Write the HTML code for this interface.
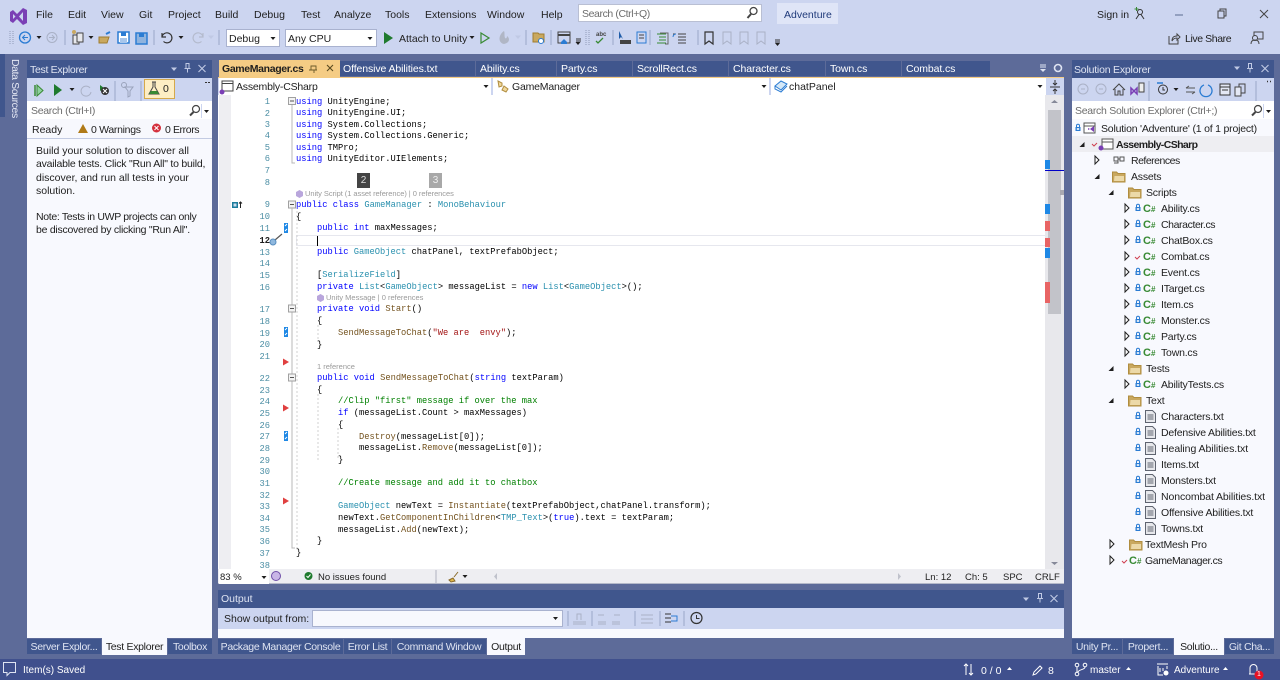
<!DOCTYPE html>
<html><head><meta charset="utf-8"><style>
html,body{margin:0;padding:0;width:1280px;height:680px;overflow:hidden;background:#5d6b99}
body{position:relative;font:10.5px/14px "Liberation Sans",sans-serif;color:#1e1e1e}
.b{position:absolute}
.t{position:absolute;white-space:pre;line-height:14px}
.w{color:#fff}.l{color:#dfe4f2}
.st{font-size:9.5px}
.c{position:absolute;white-space:pre;font:8.75px/12px "Liberation Mono",monospace;color:#000;margin-top:1px}
.n{position:absolute;width:40px;left:230px;text-align:right;font:8.75px/12px "Liberation Mono",monospace;color:#2b7a94;opacity:.85;margin-top:1px}
.k{color:#0000ff}.y{color:#2b91af}.s{color:#a31515}.g{color:#008000}.m{color:#74531f}
.h{position:absolute;white-space:pre;font-size:7.5px;line-height:10px;color:#9a9a9a;margin-top:1px}
svg{position:absolute;overflow:visible}
.tab{position:absolute;top:61px;height:15px;background:#40568d;color:#fff;line-height:14px;padding:1px 0 0 3px;box-sizing:border-box;white-space:pre;letter-spacing:-.1px}
.bt{position:absolute;top:639px;height:15px;background:#40568d;color:#dfe4f2;line-height:17px;text-align:center;white-space:pre;letter-spacing:-.3px}
.tr{position:absolute;white-space:pre;line-height:16px;height:16px;color:#1e1e1e;margin-top:1px;letter-spacing:-.2px}
.cs{position:absolute;font:bold 11px/16px "Liberation Sans",sans-serif;color:#388a34;white-space:pre;margin-top:1px}
.cs i{font-style:normal;font-size:8px}
.tb{position:absolute;width:1px;background:#9aa6c8}
</style></head><body>
<svg width="0" height="0" style="position:absolute"><defs>
<g id="lock"><rect x="-2.500" y="-1" width="5" height="4" fill="#2b7cd3"/><path d="M-1.500-1v-1.200a1.500 1.500 0 0 1 3 0V-1" fill="none" stroke="#2b7cd3"/><rect x="-1.200" y=".2" width="2.400" height="1.600" fill="#fff"/></g>
<g id="open"><path d="M1.500-2L-3.500 3H1.500z" fill="#1e1e1e"/></g>
<g id="closed"><path d="M-2-4L2 0L-2 4z" fill="#fff" stroke="#1e1e1e"/></g>
<g id="folder"><path d="M.5 2h4l1.500 1.500h7v8.500h-12.500z" fill="#c9a85f" stroke="#b08d3f"/><path d="M2.500 6h9.500v5h-10z" fill="#ecd9a8"/></g>
<g id="file"><path d="M.5 .5h7l3 3v9h-10z" fill="#e7e8ec" stroke="#5f6470"/><path d="M2.500 5h6M2.500 7h6M2.500 9h6" stroke="#5f6470"/></g>
<g id="dn"><path d="M-2.500-1h5L0 2z" fill="#1e1e1e"/></g>
<g id="dnw"><path d="M-3-1.500h6L0 2z" fill="#c0c9e4"/></g>
<g id="pin"><path d="M-2-4.500h4M-1.500-4.500v5h3v-5M-3 .5h6M0 .5v4" fill="none" stroke="#c0c9e4"/></g>
<g id="x"><path d="M-3.500-3.500l7 7M3.500-3.500l-7 7" stroke="#c0c9e4" stroke-width="1.100"/></g>
<g id="chg"><rect x="0" y="0" width="4" height="10" fill="#1e88e5"/><path d="M1 3l2-2M1 8l2-2" stroke="#fff"/></g>
<g id="tri"><path d="M0-3.500L6 0L0 3.500z" fill="#e04040"/></g>
<g id="box"><rect x=".5" y=".5" width="7" height="7" fill="#f3f3f3" stroke="#a0a0a0"/><path d="M2 4h4" stroke="#555"/></g>
<g id="uni"><path d="M3.500 0L7 2v4L3.500 8L0 6V2z" fill="#b9a6dc"/></g>
</defs></svg>

<!-- top chrome -->
<div class="b" style="left:0;top:0;width:1280px;height:54px;background:#ccd5f0"></div>
<svg style="left:9px;top:6px" width="20" height="20"><path d="M1 6l3-2 4 4 6-6 4 2v13l-4 2-6-6-4 4-3-2zM4 8v5l2.500-2.500zM14 6l-4 4.500 4 4.500z" fill="#7a3fb5" fill-rule="evenodd"/></svg>
<div class="t" style="left:36px;top:8px">File</div>
<div class="t" style="left:68px;top:8px">Edit</div>
<div class="t" style="left:101px;top:8px">View</div>
<div class="t" style="left:139px;top:8px">Git</div>
<div class="t" style="left:168px;top:8px">Project</div>
<div class="t" style="left:215px;top:8px">Build</div>
<div class="t" style="left:254px;top:8px">Debug</div>
<div class="t" style="left:301px;top:8px">Test</div>
<div class="t" style="left:334px;top:8px">Analyze</div>
<div class="t" style="left:385px;top:8px">Tools</div>
<div class="t" style="left:425px;top:8px">Extensions</div>
<div class="t" style="left:487px;top:8px">Window</div>
<div class="t" style="left:541px;top:8px">Help</div>
<div class="b" style="left:578px;top:4px;width:184px;height:18px;background:#fff;border:1px solid #b9bfd3;box-sizing:border-box"></div>
<div class="t" style="left:582px;top:7px;color:#6d6d6d;letter-spacing:-.4px">Search (Ctrl+Q)</div>
<svg style="left:745px;top:6px" width="14" height="14"><circle cx="8.500" cy="5" r="3.500" fill="none" stroke="#444" stroke-width="1.300"/><path d="M6 8L2.500 12" stroke="#444" stroke-width="2"/></svg>
<div class="b" style="left:777px;top:3px;width:61px;height:21px;background:#dfe5f7"></div>
<div class="t" style="left:784px;top:8px;color:#1f3a7a">Adventure</div>
<div class="t" style="left:1097px;top:8px">Sign in</div>
<svg style="left:1133px;top:7px" width="14" height="14"><circle cx="7" cy="5" r="2.500" fill="none" stroke="#333"/><path d="M3 12l3-4.500M11 12L8 7.500" stroke="#333"/><path d="M1.500 2h4M3.500 0v4" stroke="#388a34"/></svg>
<svg style="left:1175px;top:8px" width="90" height="12"><path d="M0 7h8" stroke="#5a6a90"/><path d="M43 3h6v7h-6zM45 3V1h6v7h-2" fill="none" stroke="#444"/><path d="M85 2l8 8M93 2l-8 8" stroke="#444"/></svg>

<!-- toolbar -->
<svg style="left:9px;top:30px" width="6" height="15"><path d="M1 1v13M4 1v13" stroke="#8f9ab8" stroke-dasharray="1 1"/></svg>
<svg style="left:0;top:0" width="520" height="54">
<circle cx="25" cy="37.500" r="5.500" fill="none" stroke="#2b7cd3" stroke-width="1.300"/><path d="M28 37.500h-5M25 35l-2.500 2.500L25 40" stroke="#2b7cd3" fill="none"/>
<use href="#dn" x="39" y="37"/>
<circle cx="52" cy="37.500" r="5" fill="none" stroke="#a9b1c6"/><path d="M49 37.500h5M52 35l2.500 2.500L52 40" stroke="#a9b1c6" fill="none"/>
<path d="M65 30v15M154 30v15M219 30v15" stroke="#9aa6c8"/>
<rect x="73" y="35" width="6" height="9" fill="#e7e8ec" stroke="#444"/><rect x="77" y="33" width="6" height="9" fill="#e7e8ec" stroke="#444"/><circle cx="74" cy="32" r="2" fill="#c9a85f"/>
<use href="#dn" x="91" y="37"/>
<path d="M99 37h10l-2 6H99z" fill="#c9a85f" stroke="#a07d2f"/><path d="M106 34l4-2" stroke="#2b7cd3" stroke-width="2"/>
<rect x="118" y="32" width="11" height="11" fill="#fff" stroke="#2b7cd3" stroke-width="1.500"/><rect x="121" y="32" width="5" height="4" fill="#2b7cd3"/><rect x="120" y="38" width="7" height="5" fill="#a7c6ec"/>
<rect x="136" y="33" width="11" height="11" fill="#8fb3de" stroke="#2b7cd3" stroke-width="1.500"/><rect x="139" y="33" width="5" height="4" fill="#2b7cd3"/>
<path d="M162 37a5 5 0 1 1 1.500 4.500M162 33v4h4" fill="none" stroke="#333" stroke-width="1.200"/>
<use href="#dn" x="181" y="37"/>
<path d="M203 37a5 5 0 1 0-1.500 4.500M203 33v4h-4" fill="none" stroke="#b4bbcd" stroke-width="1.200"/>
<use href="#dnw" x="211" y="37" style="fill:#999"/>
</svg>
<div class="b" style="left:226px;top:29px;width:54px;height:18px;background:#fff;border:1px solid #a9b2cf;box-sizing:border-box"></div>
<div class="t" style="left:229px;top:32px">Debug</div>
<svg style="left:273px;top:38px" width="6" height="4"><use href="#dn" x="0" y="0"/></svg>
<div class="b" style="left:285px;top:29px;width:92px;height:18px;background:#fff;border:1px solid #a9b2cf;box-sizing:border-box"></div>
<div class="t" style="left:288px;top:32px">Any CPU</div>
<svg style="left:370px;top:38px" width="6" height="4"><use href="#dn" x="0" y="0"/></svg>
<svg style="left:384px;top:32px" width="10" height="12"><path d="M0 0l9 6-9 6z" fill="#1f7a2e"/></svg>
<div class="t" style="left:399px;top:32px">Attach to Unity</div>
<svg style="left:0;top:0" width="800" height="54">
<use href="#dn" x="472" y="37"/>
<path d="M481 33l8 5-8 5z" fill="none" stroke="#388a34" stroke-width="1.200"/>
<path d="M504 31c-6 4-6 12 0 13 6-1 6-6 3-8 0 2-1 3-2 2-1-3 0-5-1-7z" fill="#b0b6c5"/>
<use href="#dnw" x="518" y="37" style="fill:#999"/>
<path d="M526 30v15M551 30v15M613 30v15M650 30v15M698 30v15" stroke="#9aa6c8"/>
<path d="M533 33h5l1 1h5v8h-11z" fill="#c9a85f" stroke="#a07d2f"/><circle cx="541" cy="41" r="2.500" fill="#fff" stroke="#2b7cd3"/>
<rect x="558" y="32" width="12" height="11" fill="none" stroke="#444"/><path d="M558 35h12" stroke="#444" stroke-width="2"/><path d="M561 42l3-3 3 3v2h-6z" fill="#2b7cd3"/>
<path d="M576 39h5M576 41h5" stroke="#333"/><use href="#dn" x="578" y="43"/>
<path d="M586 30v15M589 30v15" stroke="#8f9ab8" stroke-dasharray="1 1"/>
<text x="596" y="36" font-family="Liberation Sans" font-size="6" font-weight="bold" fill="#444">abc</text>
<path d="M596 41l2 2 5-5" fill="none" stroke="#388a34" stroke-width="1.300"/>
<path d="M619 31v8l2-2 2 2z" fill="#1f5ca8"/><rect x="620" y="40" width="11" height="4" fill="#444"/>
<rect x="637" y="32" width="9" height="11" fill="none" stroke="#2b7cd3"/><path d="M639 35h5M639 38h5" stroke="#444"/>
<path d="M657 34h9M659 37h7M659 40h7M657 43h9" stroke="#388a34"/><path d="M660 33h8v11h-3" fill="none" stroke="#666"/>
<path d="M673 34h3M678 34h8M678 37h8M678 40h8M678 43h8" stroke="#444"/><path d="M673 37a3 3 0 0 1 3-3" stroke="#2b7cd3" fill="none"/>
<path d="M705 32h8v12l-4-3-4 3z" fill="none" stroke="#333" stroke-width="1.200"/>
<path d="M723 32h8v12l-4-3-4 3zM740 32h8v12l-4-3-4 3zM757 32h8v12l-4-3-4 3z" fill="none" stroke="#aab1c6"/>
<path d="M775 40h5M775 42h5" stroke="#333"/><use href="#dn" x="777.500" y="44"/>
</svg>
<svg style="left:1168px;top:32px" width="13" height="13"><path d="M1 4v8h9V8" fill="none" stroke="#444"/><path d="M4 9c0-4 2-5 5-5V2l3 3-3 3V6c-2 0-4 1-5 3z" fill="none" stroke="#444"/></svg>
<div class="t" style="left:1185px;top:32px;letter-spacing:-.4px">Live Share</div>
<svg style="left:1250px;top:31px" width="14" height="14"><rect x="4" y="1" width="9" height="7" fill="none" stroke="#444"/><circle cx="5" cy="7" r="2.500" fill="#ccd5f0" stroke="#444"/><path d="M1 13c0-3 2-4 4-4s4 1 4 4" fill="none" stroke="#444"/></svg>

<!-- left rail -->
<div class="b" style="left:0;top:54px;width:5px;height:63px;background:#40568d"></div>
<div class="t" style="left:8px;top:59px;color:#e6e9f5;writing-mode:vertical-rl;letter-spacing:-.4px">Data Sources</div>

<!-- test explorer -->
<div class="b" style="left:27px;top:60px;width:185px;height:18px;background:#40568d"></div>
<div class="t l" style="left:30px;top:63px;letter-spacing:-.3px">Test Explorer</div>
<svg style="left:0;top:0" width="212" height="80"><use href="#dnw" x="174" y="69"/><use href="#pin" x="187.500" y="68"/><use href="#x" x="202" y="68.500"/></svg>
<div class="b" style="left:27px;top:78px;width:185px;height:23px;background:#ccd5f0"></div>
<svg style="left:0;top:0" width="212" height="102">
<path d="M35 85v11" stroke="#388a34" stroke-width="1.500"/><path d="M37 85l6 5.500-6 5.500z" fill="#8fd19e" stroke="#388a34"/>
<path d="M54 84l8 6-8 6z" fill="#1f7a2e"/><use href="#dn" x="72" y="89"/>
<path d="M90 88a5 5 0 1 0 1 4" fill="none" stroke="#aab1c6"/>
<path d="M100 85l4 3-4 3z" fill="#1f7a2e"/><circle cx="105" cy="91" r="4" fill="#333"/><path d="M103 89l4 4M107 89l-4 4" stroke="#fff"/>
<path d="M115 81v20M141 81v20" stroke="#9aa6c8"/>
<circle cx="124" cy="85" r="2.500" fill="none" stroke="#9aa3bb"/><path d="M125 87h8l-3 4v5l-2 1v-6z" fill="none" stroke="#9aa3bb"/>
</svg>
<div class="b" style="left:144px;top:79px;width:31px;height:20px;background:#fdeec4;border:1px solid #d5a94b;box-sizing:border-box"></div>
<svg style="left:148px;top:81px" width="12" height="15"><path d="M4 1h4M5 1v5L1 13h10L7 6V1" fill="#fdeec4" stroke="#444"/><path d="M3 10h6l2 3H1z" fill="#388a34"/></svg>
<div class="t" style="left:163px;top:82px">0</div>
<div class="b" style="left:205px;top:82px;width:2px;height:1px;background:#333;box-shadow:3px 0 #333"></div>
<div class="b" style="left:27px;top:101px;width:185px;height:18px;background:#fff"></div>
<div class="t" style="left:31px;top:104px;color:#6d6d6d;letter-spacing:-.3px">Search (Ctrl+I)</div>
<svg style="left:188px;top:104px" width="24" height="14"><circle cx="8" cy="5" r="3.500" fill="none" stroke="#444" stroke-width="1.200"/><path d="M5.500 8L2 11.500" stroke="#444" stroke-width="2"/><path d="M13.500 0v14" stroke="#ccd5f0"/><use href="#dn" x="18.500" y="7"/></svg>
<div class="b" style="left:27px;top:119px;width:185px;height:20px;background:#f7f8fd;border-bottom:1px solid #c3cbe2;box-sizing:border-box"></div>
<div class="t" style="left:32px;top:123px">Ready</div>
<svg style="left:78px;top:123px" width="11" height="11"><path d="M5 1l5 9H0z" fill="#b07a17"/></svg>
<div class="t" style="left:91px;top:123px;letter-spacing:-.3px">0 Warnings</div>
<svg style="left:151px;top:123px" width="11" height="11"><circle cx="5.500" cy="5" r="4.500" fill="#d4303d"/><path d="M3.500 3l4 4M7.500 3l-4 4" stroke="#fff"/></svg>
<div class="t" style="left:165px;top:123px;letter-spacing:-.4px">0 Errors</div>
<div class="b" style="left:27px;top:139px;width:185px;height:499px;background:#f8f9fe"></div>
<div class="t" style="left:36px;top:144px">Build your solution to discover all</div>
<div class="t" style="left:36px;top:157px;letter-spacing:-.22px">available tests. Click "Run All" to build,</div>
<div class="t" style="left:36px;top:171px">discover, and run all tests in your</div>
<div class="t" style="left:36px;top:184px">solution.</div>
<div class="t" style="left:36px;top:210px;letter-spacing:-.33px">Note: Tests in UWP projects can only</div>
<div class="t" style="left:36px;top:223px;letter-spacing:-.26px">be discovered by clicking "Run All".</div>
<div class="bt" style="left:27px;width:74px">Server Explor...</div>
<div class="bt" style="left:102px;width:65px;background:#f8f9fe;color:#1e1e1e;height:17px;top:638px;line-height:19px">Test Explorer</div>
<div class="bt" style="left:168px;width:44px">Toolbox</div>

<!-- editor tabs -->
<div class="b" style="left:219px;top:60px;width:121px;height:18px;background:#f5cc84"></div>
<div class="t" style="left:222px;top:62px;font-weight:bold;color:#1e1e1e;letter-spacing:-.35px">GameManager.cs</div>
<svg style="left:0;top:0" width="340" height="80"><path d="M311 66h5v4h-5zM309 70h8M314 70v3" fill="none" stroke="#6b5a2a" stroke-width=".9"/><path d="M327 65l6 6M333 65l-6 6" stroke="#5a4a20" stroke-width="1.100"/></svg>
<div class="tab" style="left:340px;width:135px">Offensive Abilities.txt</div>
<div class="tab" style="left:476px;width:80px;padding-left:4px">Ability.cs</div>
<div class="tab" style="left:557px;width:75px;padding-left:4px">Party.cs</div>
<div class="tab" style="left:633px;width:95px;padding-left:4px">ScrollRect.cs</div>
<div class="tab" style="left:729px;width:96px;padding-left:4px">Character.cs</div>
<div class="tab" style="left:826px;width:75px;padding-left:4px">Town.cs</div>
<div class="tab" style="left:902px;width:88px;padding-left:4px">Combat.cs</div>
<svg style="left:0;top:0" width="1070" height="80"><path d="M1040 65h6M1040 67h6" stroke="#dfe4f2"/><path d="M1040 69h6l-3 3z" fill="#dfe4f2"/><circle cx="1058" cy="68" r="3.500" fill="none" stroke="#dfe4f2" stroke-width="1.600"/></svg>
<div class="b" style="left:218px;top:77px;width:846px;height:1.500px;background:#f5cc84"></div>
<!-- nav bar -->
<div class="b" style="left:218px;top:78px;width:846px;height:17px;background:#ccd5f0"></div>
<div class="b" style="left:219px;top:78px;width:272px;height:17px;background:#fff"></div>
<div class="b" style="left:493px;top:78px;width:276px;height:17px;background:#fff"></div>
<div class="b" style="left:771px;top:78px;width:275px;height:17px;background:#fff"></div>
<svg style="left:0;top:0" width="1064" height="96">
<rect x="222" y="81" width="11" height="10" fill="#fff" stroke="#444"/><path d="M222 83.500h11" stroke="#444"/><circle cx="222" cy="92" r="2.500" fill="#7a3fb5"/>
<use href="#dn" x="486" y="86"/><use href="#dn" x="764" y="86"/><use href="#dn" x="1040" y="86"/>
<path d="M498 81l4 2v3l-3 1zM504 86l4 3-2 3-4-2z" fill="#f1d89b" stroke="#b08d3f"/>
<path d="M775 86l6-5 6 3-6 6z" fill="#d5e8f7" stroke="#2b7cd3"/><path d="M775 86v3l6 3 6-6" fill="none" stroke="#2b7cd3"/>
<path d="M1050 87h10M1055 80v5M1053 83l2 2 2-2M1055 94v-5M1053 91l2-2 2 2" fill="none" stroke="#333"/>
</svg>
<div class="t" style="left:236px;top:80px;letter-spacing:-.2px">Assembly-CSharp</div>
<div class="t" style="left:512px;top:80px;letter-spacing:-.2px">GameManager</div>
<div class="t" style="left:789px;top:80px">chatPanel</div>

<!-- code area -->
<div class="b" style="left:218px;top:95px;width:846px;height:475px;background:#fff"></div>
<div class="b" style="left:219px;top:95px;width:12px;height:475px;background:#eeeef2"></div>
<div class="b" style="left:1045px;top:95px;width:19px;height:475px;background:#e8e8ec"></div>
<div class="b" style="left:1048px;top:110px;width:13px;height:204px;background:#c2c3c9"></div>
<svg style="left:0;top:0" width="1064" height="570"><path d="M1051 103l3.500-3 3.500 3zM1051 562h7l-3.500 3z" fill="#868999"/></svg>
<div class="b" style="left:1045px;top:169.500px;width:19px;height:1.500px;background:#0000c8"></div>
<div class="b" style="left:1060px;top:190px;width:4px;height:5px;background:#a8a8b0"></div>
<div class="b" style="left:1045px;top:160px;width:5px;height:9px;background:#1e88e5"></div>
<div class="b" style="left:1045px;top:204px;width:5px;height:10px;background:#1e88e5"></div>
<div class="b" style="left:1045px;top:221px;width:5px;height:10px;background:#e86464"></div>
<div class="b" style="left:1045px;top:238px;width:5px;height:9px;background:#e86464"></div>
<div class="b" style="left:1045px;top:248px;width:5px;height:10px;background:#1e88e5"></div>
<div class="b" style="left:1045px;top:282px;width:5px;height:21px;background:#e86464"></div>
<!-- current line -->
<div class="b" style="left:296px;top:235px;width:749px;height:11px;border:1px solid #e6e7ee;border-right:0;box-sizing:border-box"></div>
<div class="b" style="left:317px;top:236px;width:1px;height:10px;background:#000"></div>
<!-- margins -->
<svg style="left:0;top:0" width="360" height="570">
<use href="#box" x="288" y="97"/><path d="M292 105v58h3" stroke="#b8b8b8" fill="none"/>
<use href="#box" x="288" y="200.500"/><path d="M292 208v340h3" stroke="#b8b8b8" fill="none"/>
<path d="M297 211v338" stroke="#d0d0d0" stroke-dasharray="2 2"/>
<use href="#box" x="288" y="304.500"/><use href="#box" x="288" y="373.500"/>
<path d="M318 325v17M318 394v68M338 428v32" stroke="#d0d0d0" stroke-dasharray="2 2"/>
<use href="#chg" x="284" y="223"/><use href="#chg" x="284" y="327"/><use href="#chg" x="284" y="431"/>
<use href="#tri" x="283" y="362"/><use href="#tri" x="283" y="408"/><use href="#tri" x="283" y="501"/>
<rect x="232" y="202" width="6" height="6" fill="#1c7c9c"/><rect x="233.500" y="203.500" width="3" height="3" fill="#cde"/><path d="M240.500 208v-6M239 203.500l1.500-1.500 1.500 1.500" stroke="#222" fill="none"/>
<path d="M275 240l7-6" stroke="#555" stroke-width="1.200"/><circle cx="273" cy="242" r="3" fill="#8fb8de" stroke="#5a8fc0"/>
</svg>
<div class="n" style="top:95px">1</div><div class="n" style="top:107px">2</div><div class="n" style="top:118px">3</div><div class="n" style="top:129px">4</div><div class="n" style="top:141px">5</div><div class="n" style="top:152px">6</div><div class="n" style="top:164px">7</div><div class="n" style="top:176px">8</div><div class="n" style="top:198px">9</div><div class="n" style="top:210px">10</div><div class="n" style="top:222px">11</div><div class="n" style="top:234px;font-weight:bold;color:#1e1e1e;opacity:1">12</div><div class="n" style="top:246px">13</div><div class="n" style="top:257px">14</div><div class="n" style="top:269px">15</div><div class="n" style="top:281px">16</div><div class="n" style="top:303px">17</div><div class="n" style="top:315px">18</div><div class="n" style="top:327px">19</div><div class="n" style="top:338px">20</div><div class="n" style="top:350px">21</div><div class="n" style="top:372px">22</div><div class="n" style="top:384px">23</div><div class="n" style="top:395px">24</div><div class="n" style="top:407px">25</div><div class="n" style="top:419px">26</div><div class="n" style="top:430px">27</div><div class="n" style="top:442px">28</div><div class="n" style="top:454px">29</div><div class="n" style="top:465px">30</div><div class="n" style="top:477px">31</div><div class="n" style="top:489px">32</div><div class="n" style="top:500px">33</div><div class="n" style="top:512px">34</div><div class="n" style="top:523px">35</div><div class="n" style="top:535px">36</div><div class="n" style="top:547px">37</div><div class="n" style="top:559px">38</div>

<div class="c" style="left:296px;top:95px"><span class="k">using</span> UnityEngine;</div>
<div class="c" style="left:296px;top:106px"><span class="k">using</span> UnityEngine.UI;</div>
<div class="c" style="left:296px;top:118px"><span class="k">using</span> System.Collections;</div>
<div class="c" style="left:296px;top:129px"><span class="k">using</span> System.Collections.Generic;</div>
<div class="c" style="left:296px;top:141px"><span class="k">using</span> TMPro;</div>
<div class="c" style="left:296px;top:152px"><span class="k">using</span> UnityEditor.UIElements;</div>
<div class="b" style="left:357px;top:173px;width:13px;height:15px;background:#444;color:#ddd;font-size:10px;line-height:15px;text-align:center">2</div>
<div class="b" style="left:429px;top:173px;width:13px;height:15px;background:#a8a8a8;color:#eee;font-size:10px;line-height:15px;text-align:center">3</div>
<svg style="left:296px;top:190px" width="8" height="8"><use href="#uni"/></svg>
<div class="h" style="left:305px;top:188px;letter-spacing:-.05px">Unity Script (1 asset reference) | 0 references</div>
<div class="c" style="left:296px;top:198px"><span class="k">public</span> <span class="k">class</span> <span class="y">GameManager</span> : <span class="y">MonoBehaviour</span></div>
<div class="c" style="left:296px;top:210px">{</div>
<div class="c" style="left:317px;top:221px"><span class="k">public</span> <span class="k">int</span> maxMessages;</div>
<div class="c" style="left:317px;top:245px"><span class="k">public</span> <span class="y">GameObject</span> chatPanel, textPrefabObject;</div>
<div class="c" style="left:317px;top:268px">[<span class="y">SerializeField</span>]</div>
<div class="c" style="left:317px;top:280px"><span class="k">private</span> <span class="y">List</span>&lt;<span class="y">GameObject</span>&gt; messageList = <span class="k">new</span> <span class="y">List</span>&lt;<span class="y">GameObject</span>&gt;();</div>
<svg style="left:317px;top:294px" width="8" height="8"><use href="#uni"/></svg>
<div class="h" style="left:326px;top:292px">Unity Message | 0 references</div>
<div class="c" style="left:317px;top:302px"><span class="k">private</span> <span class="k">void</span> <span class="m">Start</span>()</div>
<div class="c" style="left:317px;top:314px">{</div>
<div class="c" style="left:338px;top:326px"><span class="m">SendMessageToChat</span>(<span class="s">"We are  envy"</span>);</div>
<div class="c" style="left:317px;top:338px">}</div>
<div class="h" style="left:317px;top:361px">1 reference</div>
<div class="c" style="left:317px;top:371px"><span class="k">public</span> <span class="k">void</span> <span class="m">SendMessageToChat</span>(<span class="k">string</span> textParam)</div>
<div class="c" style="left:317px;top:383px">{</div>
<div class="c g" style="left:338px;top:394px;color:#008000">//Clip "first" message if over the max</div>
<div class="c" style="left:338px;top:406px"><span class="k">if</span> (messageList.Count &gt; maxMessages)</div>
<div class="c" style="left:338px;top:418px">{</div>
<div class="c" style="left:359px;top:430px"><span class="m">Destroy</span>(messageList[0]);</div>
<div class="c" style="left:359px;top:441px">messageList.<span class="m">Remove</span>(messageList[0]);</div>
<div class="c" style="left:338px;top:453px">}</div>
<div class="c g" style="left:338px;top:476px;color:#008000">//Create message and add it to chatbox</div>
<div class="c" style="left:338px;top:499px"><span class="y">GameObject</span> newText = <span class="m">Instantiate</span>(textPrefabObject,chatPanel.transform);</div>
<div class="c" style="left:338px;top:511px">newText.<span class="m">GetComponentInChildren</span>&lt;<span class="y">TMP_Text</span>&gt;(<span class="k">true</span>).text = textParam;</div>
<div class="c" style="left:338px;top:523px">messageList.<span class="m">Add</span>(newText);</div>
<div class="c" style="left:317px;top:534px">}</div>
<div class="c" style="left:296px;top:546px">}</div>

<!-- editor status -->
<div class="b" style="left:218px;top:569px;width:846px;height:15px;background:#eeeef2;border-bottom:1px solid #b5b9c9;box-sizing:border-box"></div>
<div class="b" style="left:219px;top:569px;width:50px;height:15px;background:#fff"></div>
<div class="t st" style="left:220px;top:571px">83 %</div>
<svg style="left:0;top:0" width="1064" height="590">
<use href="#dn" x="264" y="577"/>
<circle cx="276" cy="576" r="4.500" fill="#c9b6e6" stroke="#6f4fa8"/>
<circle cx="308.500" cy="576" r="4" fill="#1f7a2e"/><path d="M306.500 576l1.500 1.500 2.500-3" stroke="#fff" fill="none"/>
<path d="M436 570v13" stroke="#b0b3c0"/>
<path d="M449 580l4-2 2 3-4 1zM454 577l4-5" stroke="#8a6a2a" fill="#e0b84b"/><use href="#dn" x="465" y="576"/>
<path d="M497 573v7l-3-3.500zM898 573v7l3-3.500z" fill="#c0c2cc"/>
</svg>
<div class="t st" style="left:318px;top:571px">No issues found</div>
<div class="t st" style="left:925px;top:571px">Ln: 12</div>
<div class="t st" style="left:965px;top:571px">Ch: 5</div>
<div class="t st" style="left:1003px;top:571px">SPC</div>
<div class="t st" style="left:1035px;top:571px">CRLF</div>

<!-- output -->
<div class="b" style="left:218px;top:590px;width:846px;height:18px;background:#40568d"></div>
<div class="t l" style="left:221px;top:592px">Output</div>
<svg style="left:0;top:0" width="1064" height="610"><use href="#dnw" x="1026" y="599"/><use href="#pin" x="1040" y="598"/><use href="#x" x="1054" y="598.500"/></svg>
<div class="b" style="left:218px;top:608px;width:846px;height:21px;background:#ccd5f0"></div>
<div class="t" style="left:224px;top:612px">Show output from:</div>
<div class="b" style="left:312px;top:610px;width:251px;height:17px;background:#f7f8fd;border:1px solid #a9b2cf;box-sizing:border-box"></div>
<svg style="left:0;top:0" width="720" height="630">
<use href="#dn" x="555.500" y="618"/>
<path d="M568 611v15M592 611v15M635 611v15M660 611v15M684 611v15" stroke="#9aa6c8"/>
<path d="M573 622h13M573 624h13M577 620v-6h4v6" fill="none" stroke="#aab1c6"/>
<path d="M598 622h8M598 624h8M612 622h8M612 624h8M598 615h6M614 615h6" stroke="#aab1c6"/>
<path d="M641 615h12M641 619h12M641 623h12" stroke="#aab1c6"/>
<path d="M665 614h6M665 618h6M665 622h6" stroke="#333"/><path d="M671 616h6v5h-6" fill="none" stroke="#2b7cd3"/>
<circle cx="696.500" cy="618" r="5.500" fill="none" stroke="#333" stroke-width="1.200"/><path d="M696.500 615v3.500h3" fill="none" stroke="#333"/>
</svg>
<div class="b" style="left:218px;top:629px;width:846px;height:9px;background:#f8f9fe"></div>
<div class="bt" style="left:218px;width:125px">Package Manager Console</div>
<div class="bt" style="left:344px;width:47px">Error List</div>
<div class="bt" style="left:392px;width:94px">Command Window</div>
<div class="bt" style="left:487px;width:38px;background:#f8f9fe;color:#1e1e1e;height:17px;top:638px;line-height:19px">Output</div>

<!-- solution explorer -->
<div class="b" style="left:1072px;top:60px;width:202px;height:18px;background:#40568d"></div>
<div class="t l" style="left:1074px;top:63px;letter-spacing:-.2px">Solution Explorer</div>
<svg style="left:0;top:0" width="1274" height="80"><use href="#dnw" x="1237" y="68"/><use href="#pin" x="1250" y="68"/><use href="#x" x="1265" y="68.500"/></svg>
<div class="b" style="left:1072px;top:78px;width:202px;height:23px;background:#ccd5f0"></div>
<svg style="left:0;top:0" width="1274" height="102">
<circle cx="1083" cy="89" r="5" fill="none" stroke="#aab1c6"/><circle cx="1101" cy="89" r="5" fill="none" stroke="#aab1c6"/><path d="M1085 89h-4M1099 89h4" stroke="#aab1c6"/>
<path d="M1113 90l6-6 6 6M1115 89v6h3v-4h2v4h3v-6" fill="none" stroke="#444"/>
<path d="M1131 88l6 6v-6l-6 6z" fill="none" stroke="#7a3fb5" stroke-width="1.500"/><rect x="1139" y="83" width="5" height="9" fill="#eee" stroke="#444"/>
<path d="M1149 81v20M1256 81v20" stroke="#9aa6c8"/>
<circle cx="1163" cy="89.500" r="4.500" fill="none" stroke="#333"/><path d="M1157 83h6" stroke="#2b7cd3" stroke-width="1.500"/><path d="M1163 87v3h2" stroke="#333" fill="none"/>
<use href="#dn" x="1176" y="89"/>
<path d="M1186 88h9M1186 92h9M1186 88l3-2M1195 92l-3 2" stroke="#555" fill="none"/>
<path d="M1204 85a6 6 0 1 0 4 0" fill="none" stroke="#2b7cd3" stroke-width="1.300"/>
<rect x="1220" y="84" width="10" height="11" fill="#e4e8f5" stroke="#333"/><path d="M1222 90h6M1220 87h10" stroke="#333"/>
<rect x="1239" y="84" width="6" height="9" fill="none" stroke="#444"/><rect x="1235" y="87" width="6" height="9" fill="#e4e8f5" stroke="#444"/>
<path d="M1267 81.500h1M1270 81.500h1" stroke="#333" stroke-width="1.500"/>
</svg>
<div class="b" style="left:1072px;top:101px;width:202px;height:18px;background:#fff"></div>
<div class="t" style="left:1075px;top:104px;color:#6d6d6d;letter-spacing:-.28px">Search Solution Explorer (Ctrl+;)</div>
<svg style="left:1250px;top:104px" width="24" height="14"><circle cx="8" cy="5" r="3.500" fill="none" stroke="#444" stroke-width="1.200"/><path d="M5.500 8L2 11.500" stroke="#444" stroke-width="2"/><path d="M13.500 0v14" stroke="#ccd5f0"/><use href="#dn" x="18.500" y="7"/></svg>
<div class="b" style="left:1072px;top:119px;width:202px;height:519px;background:#f8f9fe"></div>
<div class="b" style="left:1072px;top:136px;width:202px;height:16px;background:#eeeef2"></div>

<svg style="left:0;top:0" width="1274" height="570">
<use href="#lock" x="1078" y="128"/><rect x="1084" y="123" width="11" height="10" fill="#fff" stroke="#555"/><path d="M1084 126h11" stroke="#555"/><path d="M1090 129l4 3v-6l-4 3-2-1v2z" fill="#7a3fb5"/>
<use href="#open" x="1083" y="144"/><path d="M1092 144l2 2 3-3" stroke="#d04050" fill="none"/><rect x="1102" y="139" width="11" height="10" fill="#fff" stroke="#555"/><path d="M1102 142h11" stroke="#555"/><circle cx="1101" cy="148" r="2.500" fill="#7a3fb5"/>
<use href="#closed" x="1097" y="160"/><path d="M1114 157h4v4h-4zM1120 157h4v4h-4zM1114 163h4v-2M1118 159h2" fill="none" stroke="#555"/>
<use href="#open" x="1098" y="176"/><use href="#folder" x="1112" y="170"/>
<use href="#open" x="1112" y="192"/><use href="#folder" x="1128" y="186"/>
<use href="#open" x="1112" y="368"/><use href="#folder" x="1128" y="362"/>
<use href="#open" x="1112" y="400"/><use href="#folder" x="1128" y="394"/>
<use href="#closed" x="1112" y="544"/><use href="#folder" x="1129" y="538"/>
<use href="#closed" x="1112" y="560"/><path d="M1122 561l2 2 3-3" stroke="#d04050" fill="none"/>
<use href="#closed" x="1127" y="208"/><use href="#lock" x="1138" y="208"/>
<use href="#closed" x="1127" y="224"/><use href="#lock" x="1138" y="224"/>
<use href="#closed" x="1127" y="240"/><use href="#lock" x="1138" y="240"/>
<use href="#closed" x="1127" y="256"/><path d="M1135 257l2 2 3-3" stroke="#d04050" fill="none"/>
<use href="#closed" x="1127" y="272"/><use href="#lock" x="1138" y="272"/>
<use href="#closed" x="1127" y="288"/><use href="#lock" x="1138" y="288"/>
<use href="#closed" x="1127" y="304"/><use href="#lock" x="1138" y="304"/>
<use href="#closed" x="1127" y="320"/><use href="#lock" x="1138" y="320"/>
<use href="#closed" x="1127" y="336"/><use href="#lock" x="1138" y="336"/>
<use href="#closed" x="1127" y="352"/><use href="#lock" x="1138" y="352"/>
<use href="#closed" x="1127" y="384"/><use href="#lock" x="1138" y="384"/>
<use href="#lock" x="1138" y="416"/><use href="#file" x="1145" y="410"/>
<use href="#lock" x="1138" y="432"/><use href="#file" x="1145" y="426"/>
<use href="#lock" x="1138" y="448"/><use href="#file" x="1145" y="442"/>
<use href="#lock" x="1138" y="464"/><use href="#file" x="1145" y="458"/>
<use href="#lock" x="1138" y="480"/><use href="#file" x="1145" y="474"/>
<use href="#lock" x="1138" y="496"/><use href="#file" x="1145" y="490"/>
<use href="#lock" x="1138" y="512"/><use href="#file" x="1145" y="506"/>
<use href="#lock" x="1138" y="528"/><use href="#file" x="1145" y="522"/>
</svg>
<div class="tr" style="left:1101px;top:120px">Solution 'Adventure' (1 of 1 project)</div>
<div class="tr" style="left:1116px;top:136px;font-weight:bold;letter-spacing:-.6px">Assembly-CSharp</div>
<div class="tr" style="left:1131px;top:152px;letter-spacing:-.5px">References</div>
<div class="tr" style="left:1131px;top:168px">Assets</div>
<div class="tr" style="left:1146px;top:184px">Scripts</div>
<div class="cs" style="left:1143px;top:200px">C<i>#</i></div><div class="tr" style="left:1161px;top:200px">Ability.cs</div>
<div class="cs" style="left:1143px;top:216px">C<i>#</i></div><div class="tr" style="left:1161px;top:216px;letter-spacing:-.4px">Character.cs</div>
<div class="cs" style="left:1143px;top:232px">C<i>#</i></div><div class="tr" style="left:1161px;top:232px">ChatBox.cs</div>
<div class="cs" style="left:1143px;top:248px">C<i>#</i></div><div class="tr" style="left:1161px;top:248px">Combat.cs</div>
<div class="cs" style="left:1143px;top:264px">C<i>#</i></div><div class="tr" style="left:1161px;top:264px">Event.cs</div>
<div class="cs" style="left:1143px;top:280px">C<i>#</i></div><div class="tr" style="left:1161px;top:280px">ITarget.cs</div>
<div class="cs" style="left:1143px;top:296px">C<i>#</i></div><div class="tr" style="left:1161px;top:296px">Item.cs</div>
<div class="cs" style="left:1143px;top:312px">C<i>#</i></div><div class="tr" style="left:1161px;top:312px">Monster.cs</div>
<div class="cs" style="left:1143px;top:328px">C<i>#</i></div><div class="tr" style="left:1161px;top:328px">Party.cs</div>
<div class="cs" style="left:1143px;top:344px">C<i>#</i></div><div class="tr" style="left:1161px;top:344px">Town.cs</div>
<div class="tr" style="left:1146px;top:360px">Tests</div>
<div class="cs" style="left:1143px;top:376px">C<i>#</i></div><div class="tr" style="left:1161px;top:376px">AbilityTests.cs</div>
<div class="tr" style="left:1146px;top:392px">Text</div>
<div class="tr" style="left:1161px;top:408px">Characters.txt</div>
<div class="tr" style="left:1161px;top:424px">Defensive Abilities.txt</div>
<div class="tr" style="left:1161px;top:440px;letter-spacing:-.05px">Healing Abilities.txt</div>
<div class="tr" style="left:1161px;top:456px">Items.txt</div>
<div class="tr" style="left:1161px;top:472px">Monsters.txt</div>
<div class="tr" style="left:1161px;top:488px;letter-spacing:-.1px">Noncombat Abilities.txt</div>
<div class="tr" style="left:1161px;top:504px">Offensive Abilities.txt</div>
<div class="tr" style="left:1161px;top:520px">Towns.txt</div>
<div class="tr" style="left:1145px;top:536px">TextMesh Pro</div>
<div class="cs" style="left:1129px;top:552px">C<i>#</i></div><div class="tr" style="left:1145px;top:552px;letter-spacing:-.4px">GameManager.cs</div>
<div class="bt" style="left:1072px;width:50px">Unity Pr...</div>
<div class="bt" style="left:1123px;width:50px">Propert...</div>
<div class="bt" style="left:1174px;width:50px;background:#f8f9fe;color:#1e1e1e;height:17px;top:638px;line-height:19px">Solutio...</div>
<div class="bt" style="left:1225px;width:49px">Git Cha...</div>

<!-- status bar -->
<div class="b" style="left:0;top:659px;width:1280px;height:21px;background:#40508d"></div>
<svg style="left:3px;top:662px" width="15" height="15"><path d="M.5 .5h12v10H7l-3 3v-3H.5z" fill="none" stroke="#dfe4f2"/></svg>
<div class="t w" style="left:23px;top:664px;font-size:10px">Item(s) Saved</div>
<svg style="left:0;top:0" width="1280" height="680">
<path d="M966 664v11M964 666l2-2 2 2M971 664v11M969 673l2 2 2-2" fill="none" stroke="#fff"/>
<path d="M1007 670h5l-2.500-3z" fill="#fff"/>
<path d="M1033 675l1-3 6-6 2 2-6 6z" fill="none" stroke="#fff"/>
<circle cx="1077" cy="665" r="1.800" fill="none" stroke="#fff"/><circle cx="1077" cy="674" r="1.800" fill="none" stroke="#fff"/><circle cx="1085" cy="665" r="1.800" fill="none" stroke="#fff"/><path d="M1077 667v5M1085 667c0 3-6 2-7 5" fill="none" stroke="#fff"/>
<path d="M1126 670h5l-2.500-3zM1223 670h5l-2.500-3z" fill="#fff"/>
<path d="M1157 664h11M1158 666v9h5M1167 666v3M1160 668v4M1163 668v3" fill="none" stroke="#fff"/><circle cx="1166" cy="673" r="2.500" fill="#fff"/>
<path d="M1250 674v-6a3.500 3.500 0 0 1 7 0v6h-8" fill="none" stroke="#fff"/>
<circle cx="1259" cy="675" r="4.500" fill="#e81123"/>
</svg>
<div class="t w" style="left:981px;top:664px">0 / 0</div>
<div class="t w" style="left:1048px;top:664px">8</div>
<div class="t w" style="left:1090px;top:664px;font-size:10px">master</div>
<div class="t w" style="left:1174px;top:664px;font-size:10px">Adventure</div>
<div class="t w" style="left:1257px;top:669px;font-size:7px;line-height:12px">1</div>
</body></html>
